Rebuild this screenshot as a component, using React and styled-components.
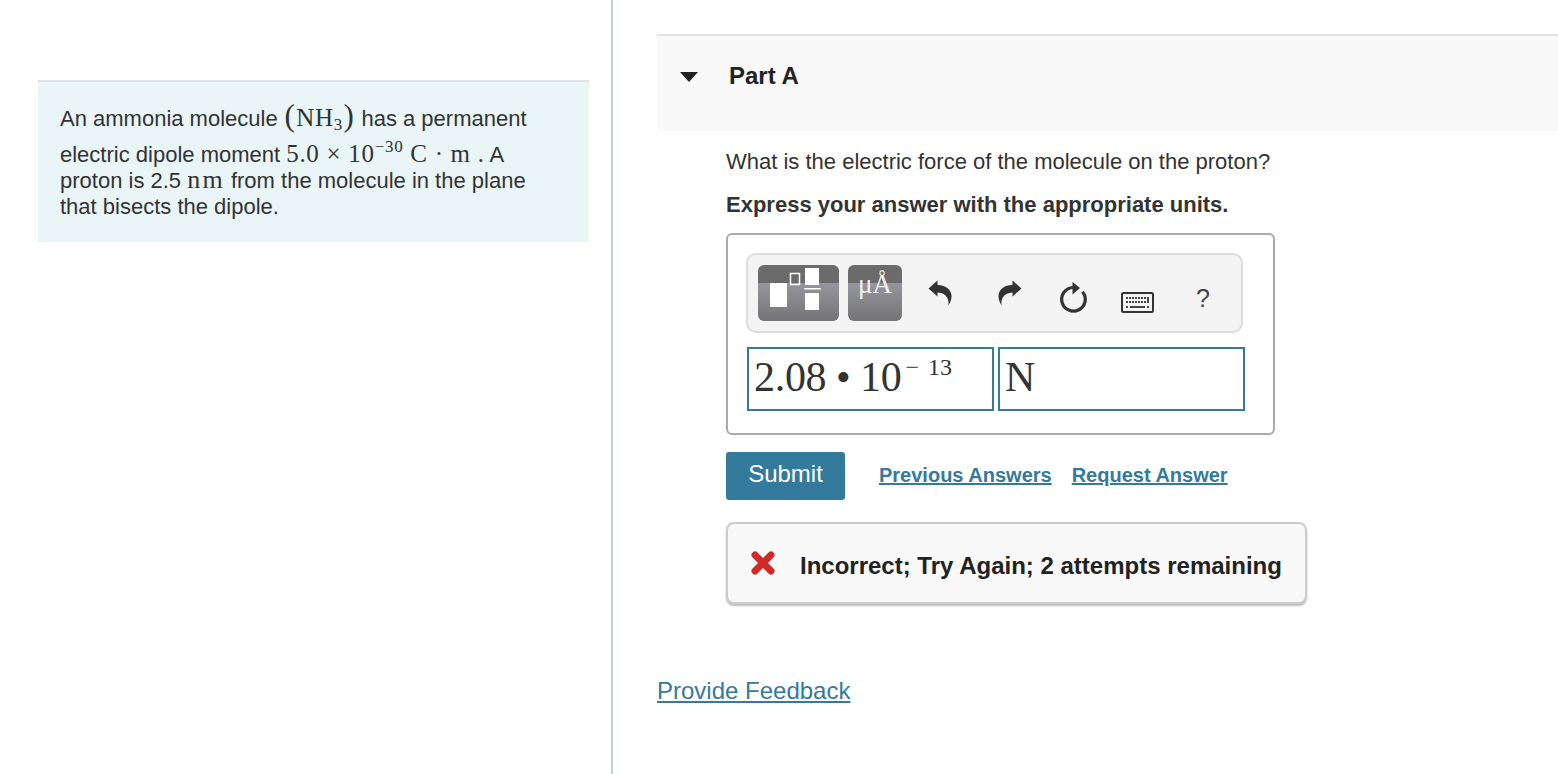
import React from 'react'
import styled, { createGlobalStyle } from 'styled-components'

const GlobalStyle = createGlobalStyle`
  html, body { margin: 0; padding: 0; background: #fff; }
  body { font-family: "Liberation Sans", Arial, sans-serif; color: #333; overflow: hidden; }
`

const Page = styled.div`
  display: flex;
  height: 774px;
`

const LeftColumn = styled.div`
  box-sizing: border-box;
  width: 613px;
  flex: none;
  padding: 80px 22px 0 38px;
  border-right: 2px solid #c3cfe0;
`

const Intro = styled.div`
  box-sizing: border-box;
  height: 162px;
  padding: 13px 22px 0;
  background: #e9f5f7;
  border-top: 2px solid #e0e2e3;
  font-size: 22px;
`

const IntroLine = styled.div`
  height: ${p => p.$h}px;
  line-height: ${p => p.$h}px;
  white-space: nowrap;
`

const Math = styled.span`
  font-family: "Liberation Serif", "Times New Roman", serif;
  font-size: ${p => p.$size || 25}px;
  letter-spacing: ${p => p.$spacing ?? 0.7}px;
`

const MathSup = styled.sup`
  font-size: 17px;
  line-height: 0;
  vertical-align: 10px;
`

const MathSub = styled.sub`
  font-size: 17px;
  line-height: 0;
  vertical-align: -4px;
`

const Paren = styled.span`
  font-family: "Liberation Serif", "Times New Roman", serif;
  font-size: 31px;
  font-weight: 400;
  line-height: 0;
  margin: 0 0.7px;
`

const RightColumn = styled.div`
  flex: 1;
  min-width: 0;
  padding: 34px 0 0 44px;
`

const PartHeader = styled.div`
  box-sizing: border-box;
  height: 97px;
  display: flex;
  align-items: flex-start;
  padding: 26px 0 0 23px;
  background: #f9f9f9;
  border-top: 2px solid #e2e2e2;
`

const Caret = styled.span`
  width: 0;
  height: 0;
  margin: 10px 31px 0 0;
  border-left: 9px solid transparent;
  border-right: 9px solid transparent;
  border-top: 10px solid #222;
`

const PartTitle = styled.h2`
  margin: 0;
  font-size: 24px;
  line-height: 28px;
  font-weight: 700;
  color: #222;
`

const Body = styled.div`
  padding: 18px 0 0 69px;
`

const Question = styled.p`
  margin: 0 0 ${p => (p.$strong ? 15 : 17)}px;
  font-size: 22px;
  line-height: 26px;
  font-weight: ${p => (p.$strong ? 700 : 400)};
`

const AnswerPanel = styled.div`
  box-sizing: border-box;
  width: 549px;
  height: 202px;
  padding: 18px 18px 0;
  border: 2px solid #aaa;
  border-radius: 6px;
`

const Toolbar = styled.div`
  box-sizing: border-box;
  width: 497px;
  height: 80px;
  display: flex;
  align-items: center;
  padding: 0 0 0 10px;
  background: #f4f4f4;
  border: 2px solid #ddd;
  border-radius: 10px;
`

const TemplateButton = styled.div`
  box-sizing: border-box;
  flex: none;
  width: ${p => p.$w}px;
  height: 56px;
  margin-right: 9px;
  border-radius: 6px;
  overflow: hidden;
  display: flex;
  justify-content: center;
  background: linear-gradient(#6b6b6b 0, #6b6b6b 18px, #97959d 18px, #747474 100%);
`

const UnitsGlyph = styled.span`
  font-family: "Liberation Serif", serif;
  font-size: 27px;
  line-height: 38px;
  color: #f0f0f0;
  white-space: nowrap;
`

const ToolIcon = styled.span`
  flex: none;
  display: flex;
  align-items: center;
  justify-content: center;
  width: ${p => p.$w}px;
  padding-top: ${p => p.$drop || 0}px;
  color: #333;
`

const HelpMark = styled.span`
  font-size: 25px;
  color: #444;
`

const AnswerRow = styled.div`
  display: flex;
  gap: 4px;
  margin: 14px 0 0 1px;
`

const AnswerBox = styled.div`
  box-sizing: border-box;
  width: 247px;
  height: 64px;
  padding: 0 0 0 5px;
  border: 2px solid #347a9c;
  font-family: "Liberation Serif", "Times New Roman", serif;
  font-size: 42px;
  line-height: 56px;
  letter-spacing: -0.3px;
  word-spacing: -0.5px;
  color: #333;
  white-space: nowrap;
`

const Exponent = styled.sup`
  font-size: 24px;
  line-height: 0;
  vertical-align: 16px;
  margin-left: 4px;
  letter-spacing: 0;
  word-spacing: 3px;
`

const Actions = styled.div`
  display: flex;
  align-items: center;
  margin-top: 17px;
`

const SubmitButton = styled.button`
  width: 119px;
  height: 48px;
  padding: 0 0 5px;
  border: 0;
  border-radius: 3px;
  background: #347a9c;
  color: #fff;
  font: 400 24px "Liberation Sans", Arial, sans-serif;
`

const ActionLink = styled.a`
  margin: 0 0 2px ${p => p.$gap}px;
  font-size: 20px;
  font-weight: 700;
  color: #347a9c;
  text-decoration: underline;
`

const Feedback = styled.div`
  box-sizing: border-box;
  width: 581px;
  height: 82px;
  margin-top: 22px;
  display: flex;
  align-items: center;
  padding: 0 0 0 23px;
  background: #f9f9f9;
  border: 2px solid #ccc;
  border-radius: 8px;
  box-shadow: 0 2px 2px #bbb;
  font-size: 24px;
  font-weight: 700;
  color: #222;
  white-space: nowrap;
`

const FeedbackIcon = styled.svg`
  flex: none;
  margin-right: 25px;
`

const FeedbackText = styled.span`
  margin-top: 6px;
`

const ProvideFeedback = styled.a`
  display: inline-block;
  margin-top: 73px;
  font-size: 24px;
  line-height: 28px;
  color: #347a9c;
  text-decoration: underline;
`

function FractionIcon() {
  return (
    <svg width="81" height="56" viewBox="0 0 81 56">
      <rect x="12" y="18" width="17" height="24" fill="#fff" />
      <rect x="32.5" y="8.5" width="9" height="11" fill="none" stroke="#fff" strokeWidth="1.5" />
      <rect x="47" y="3" width="14" height="17" fill="#fff" />
      <rect x="46" y="23" width="17" height="1.5" fill="#fff" />
      <rect x="47" y="28" width="14" height="17" fill="#fff" />
    </svg>
  )
}

function UndoIcon({ flip }) {
  return (
    <svg width="24" height="26" viewBox="0 0 24 26" style={flip ? { transform: 'scaleX(-1)' } : undefined}>
      <path
        d="M0.5 8.5 L9.5 0.5 V5 C18 5 24 10 23.5 17 C23.3 20 22 23 20.5 25.5 C21 21 20 13 9.5 12.5 V16.5 Z"
        fill="#333"
      />
    </svg>
  )
}

function ResetIcon() {
  return (
    <svg width="28" height="31" viewBox="0 0 28 31">
      <path d="M13 5.5 A11.8 11.8 0 1 0 22.5 9.7" fill="none" stroke="#333" strokeWidth="3.2" />
      <path d="M12.5 0 L20 6 L12.5 12.5 Z" fill="#333" />
    </svg>
  )
}

function KeyboardIcon() {
  const keys = []
  for (let row = 0; row < 2; row++) {
    for (let i = 0; i < 7; i++) {
      keys.push(<rect key={`${row}-${i}`} x={5 + i * 3} y={5 + row * 4} width="2" height="2" fill="#444" />)
    }
  }
  return (
    <svg width="33" height="21" viewBox="0 0 33 21">
      <rect x="1" y="1" width="31" height="19" rx="1.5" fill="#f4f4f4" stroke="#333" strokeWidth="2" />
      {keys}
      <rect x="26" y="5" width="2" height="6" fill="#444" />
      <rect x="5" y="14" width="2" height="2" fill="#444" />
      <rect x="9" y="14" width="15" height="2" fill="#444" />
      <rect x="26" y="14" width="2" height="2" fill="#444" />
    </svg>
  )
}

export default function App() {
  return (
    <>
      <GlobalStyle />
      <Page>
        <LeftColumn>
          <Intro>
            <IntroLine $h={46}>
              An ammonia molecule <Math><Paren>(</Paren>NH<MathSub>3</MathSub><Paren>)</Paren></Math> has a permanent
            </IntroLine>
            <IntroLine $h={26}>
              electric dipole moment <Math>5.0 × 10<MathSup>−30</MathSup> C · m .</Math> A
            </IntroLine>
            <IntroLine $h={26}>
              proton is 2.5 <Math $size={26} $spacing={2.2}>nm</Math> from the molecule in the plane
            </IntroLine>
            <IntroLine $h={28}>that bisects the dipole.</IntroLine>
          </Intro>
        </LeftColumn>
        <RightColumn>
          <PartHeader>
            <Caret />
            <PartTitle>Part A</PartTitle>
          </PartHeader>
          <Body>
            <Question>What is the electric force of the molecule on the proton?</Question>
            <Question $strong>Express your answer with the appropriate units.</Question>
            <AnswerPanel>
              <Toolbar>
                <TemplateButton $w={81}><FractionIcon /></TemplateButton>
                <TemplateButton $w={54}><UnitsGlyph>μÅ</UnitsGlyph></TemplateButton>
                <ToolIcon $w={58}><UndoIcon /></ToolIcon>
                <ToolIcon $w={82}><UndoIcon flip /></ToolIcon>
                <ToolIcon $w={46} $drop={8}><ResetIcon /></ToolIcon>
                <ToolIcon $w={80} $drop={18}><KeyboardIcon /></ToolIcon>
                <ToolIcon $w={52} $drop={10}><HelpMark>?</HelpMark></ToolIcon>
              </Toolbar>
              <AnswerRow>
                <AnswerBox>2.08 • 10<Exponent>− 13</Exponent></AnswerBox>
                <AnswerBox>N</AnswerBox>
              </AnswerRow>
            </AnswerPanel>
            <Actions>
              <SubmitButton>Submit</SubmitButton>
              <ActionLink $gap={34} href="#">Previous Answers</ActionLink>
              <ActionLink $gap={20} href="#">Request Answer</ActionLink>
            </Actions>
            <Feedback>
              <FeedbackIcon width="24" height="24" viewBox="0 0 24 24">
                <path d="M4 4 L20 20 M20 4 L4 20" stroke="#cf2a27" strokeWidth="7" strokeLinecap="round" />
              </FeedbackIcon>
              <FeedbackText>Incorrect; Try Again; 2 attempts remaining</FeedbackText>
            </Feedback>
          </Body>
          <ProvideFeedback href="#">Provide Feedback</ProvideFeedback>
        </RightColumn>
      </Page>
    </>
  )
}
